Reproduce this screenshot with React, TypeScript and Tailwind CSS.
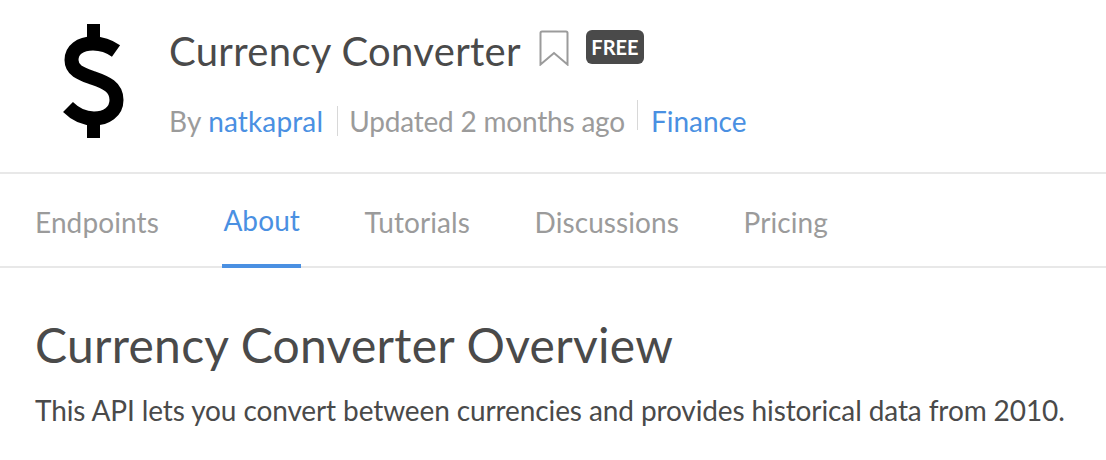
const TABS = ['Endpoints', 'About', 'Tutorials', 'Discussions', 'Pricing'];

function DollarIcon() {
  return (
    <svg width="61" height="114" viewBox="0 0 61 114" className="shrink-0">
      <rect x="24" y="0" width="13" height="18" fill="#000" />
      <rect x="24" y="96" width="13" height="18" fill="#000" />
      <path
        d="M53 27 C46 22 38 19.500 30 19.500 C17 19.500 8.500 26 8.500 36 C8.500 47 19 50 30 54 C43 58.500 53.500 63 53.500 76 C53.500 88 43 94.500 31 94.500 C21 94.500 12 90 5 83"
        fill="none"
        stroke="#000"
        strokeWidth="14"
      />
    </svg>
  );
}

function BookmarkIcon() {
  return (
    <svg width="30" height="36" viewBox="0 0 30 36" className="shrink-0">
      <path
        d="M1.500 34.500 V3 Q1.500 1.500 3 1.500 H27 Q28.500 1.500 28.500 3 V34.500 L15 23 Z"
        fill="none"
        stroke="#9b9b9b"
        strokeWidth="2"
      />
    </svg>
  );
}

export default function App() {
  return (
    <div className="w-[1106px] h-[460px] overflow-hidden bg-white font-['Lato',sans-serif] text-[#4a4a4a]">
      <header className="h-[174px] border-b-2 border-[#e8e8e8] flex pl-[63px] pt-[24px]">
        <DollarIcon />
        <div className="ml-[46px]">
          <div className="flex items-start h-[62px]">
            <h1 className="text-[40px] leading-[54px] font-normal tracking-[0.33px] -ml-[1px]">Currency Converter</h1>
            <div className="ml-[18px] mt-[6px]">
              <BookmarkIcon />
            </div>
            <span className="ml-[17px] mt-[6px] h-[34px] w-[58px] rounded-[6px] bg-[#4a4a4a] text-white text-[20px] font-bold leading-[34px] text-center">
              FREE
            </span>
          </div>
          <div className="flex items-start text-[28px] leading-[36px] text-[#9b9b9b] mt-[17px]">
            <span className="tracking-[0.15px] -ml-[1px]">
              By <a className="text-[#4a90e2]">natkapral</a>
            </span>
            <span className="ml-[14px] mr-[11px] mt-[3px] w-[1px] h-[30px] bg-[#d8d8d8]" />
            <span className="tracking-[-0.2px]">Updated 2 months ago</span>
            <span className="ml-[12px] mr-[13px] -mt-[3px] w-[1px] h-[30px] bg-[#d8d8d8]" />
            <a className="text-[#4a90e2]">Finance</a>
          </div>
        </div>
      </header>
      <nav className="h-[94px] border-b-2 border-[#e8e8e8] flex pl-[35px] gap-[64.5px] tracking-[0.1px]">
        {TABS.map(tab => (
          <div
            key={tab}
            className={
              tab === 'About'
                ? 'h-[94px] border-b-4 border-[#4a90e2] text-[#4a90e2] text-[28px] leading-[92px] px-[1px] -mx-[1px]'
                : 'text-[#9b9b9b] text-[28px] leading-[96px]'
            }
          >
            {tab}
          </div>
        ))}
      </nav>
      <main className="pl-[35px] pt-[45px]">
        <h2 className="text-[48px] leading-[64px] font-normal tracking-[0.27px]">Currency Converter Overview</h2>
        <p className="text-[28px] leading-[40px] mt-[13px] tracking-[-0.11px]">
          This API lets you convert between currencies and provides historical data from 2010.
        </p>
      </main>
    </div>
  );
}
